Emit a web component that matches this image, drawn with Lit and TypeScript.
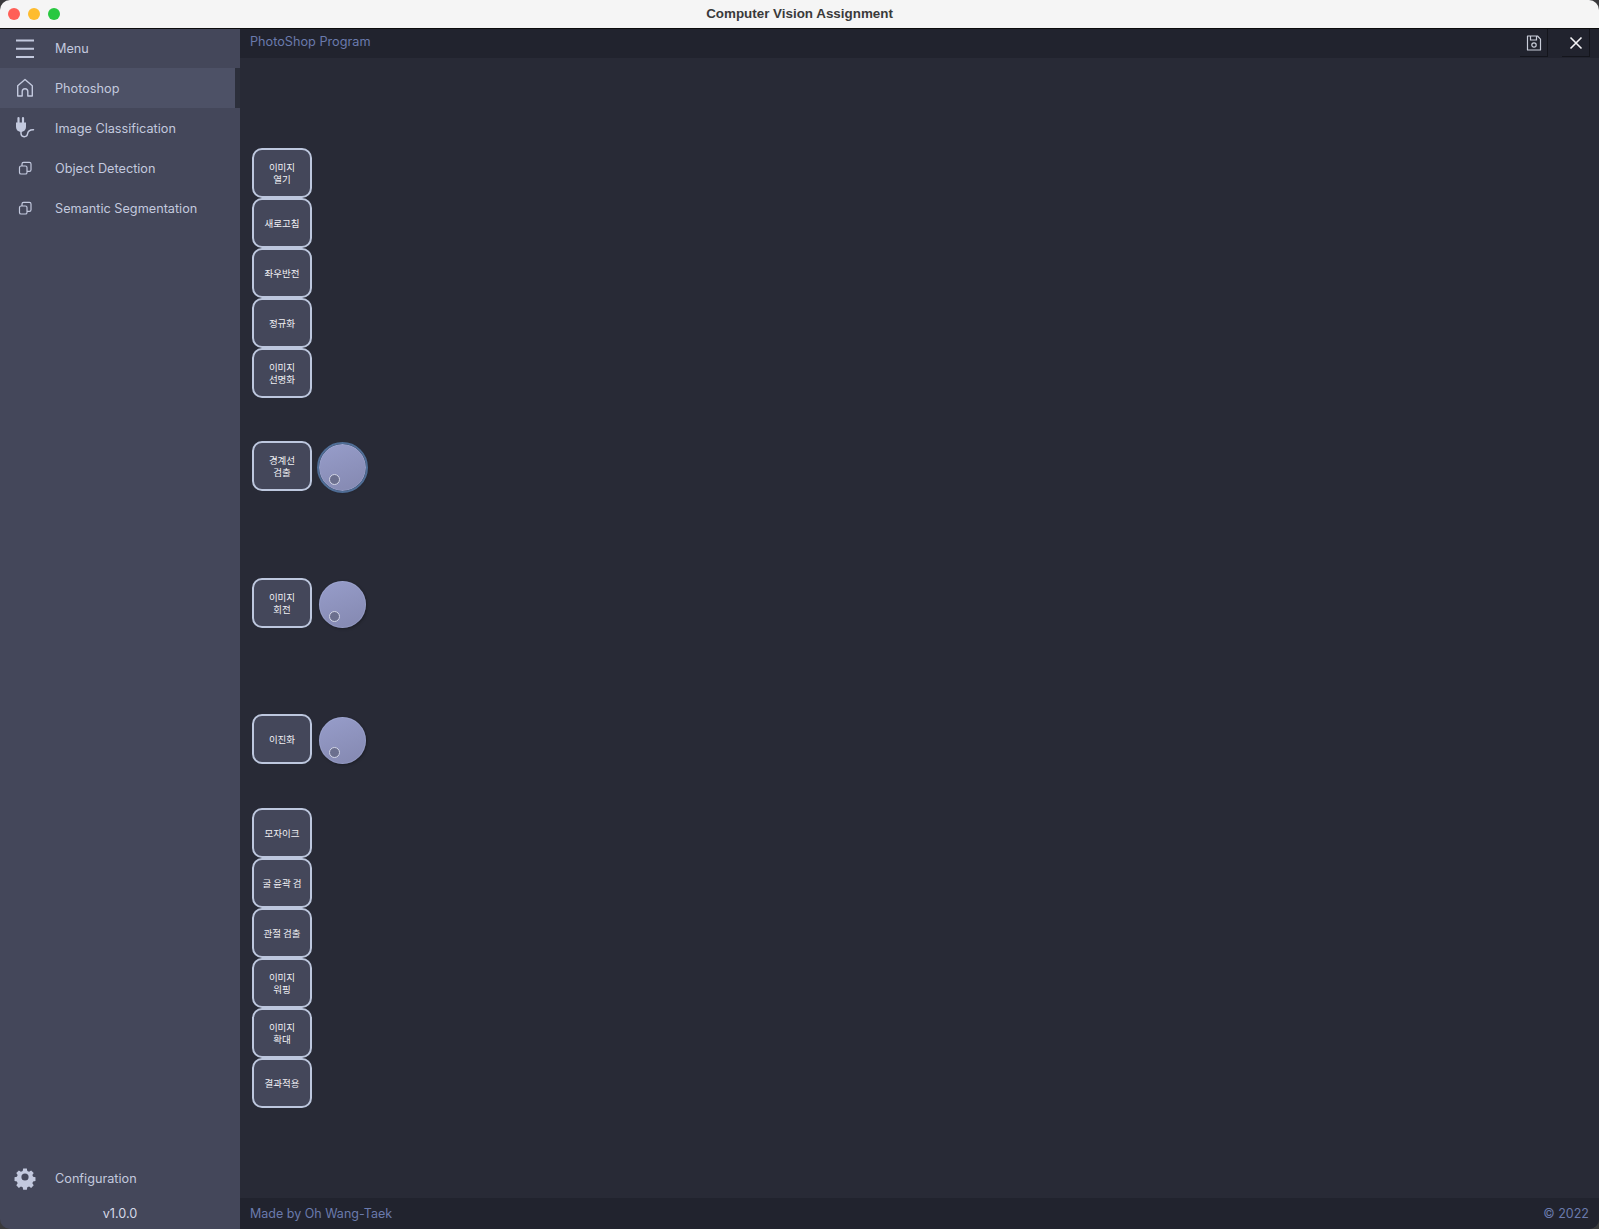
import { LitElement, html, css, svg } from "lit";
import { customElement } from "lit/decorators.js";

const copyIcon = svg`<path d="M13 14v-2a1.6 1.6 0 0 1 1.6-1.6h5.8a1.6 1.6 0 0 1 1.6 1.6v5.8a1.6 1.6 0 0 1-1.6 1.6H18" fill="none" stroke="currentColor" stroke-width="1.2"/><rect x="10.5" y="14" width="7.5" height="8" rx="1.6" fill="none" stroke="currentColor" stroke-width="1.2"/>`;

const icons = {
  menu: svg`<path d="M7 7.5h18M7 15.75h18M7 24h18" fill="none" stroke="currentColor" stroke-width="1.8"/>`,
  home: svg`<path d="M8.7 24V13.8L16 7.5l7.3 6.3V24h-4.5v-4.5a2.8 2.8 0 0 0-5.6 0V24z" fill="none" stroke="currentColor" stroke-width="1.4" stroke-linejoin="round"/>`,
  plug: svg`<path d="M9.5 6v4.5M14 6v4.5" stroke="currentColor" stroke-width="2.2" stroke-linecap="round" fill="none"/><path d="M7 10.5h10v4.5a5 5 0 0 1-10 0z" fill="currentColor"/><path d="M12 19v2.5c0 4 6 4.2 6.5.5.4-3 3-4.3 6-4.2" fill="none" stroke="currentColor" stroke-width="1.5" stroke-linecap="round"/>`,
  copy: copyIcon,
  gear: svg`<path fill-rule="evenodd" fill="currentColor" d="M13.7 5.5h4.6l.6 3 2.2 1 2.6-1.7 3.2 3.2-1.7 2.6.9 2.2 3 .6v4.6l-3 .6-.9 2.2 1.7 2.6-3.2 3.2-2.6-1.7-2.2.9-.6 3h-4.6l-.6-3-2.2-.9-2.6 1.7-3.2-3.2 1.7-2.6-.9-2.2-3-.6v-4.6l3-.6.9-2.2-1.7-2.6 3.2-3.2 2.6 1.7 2.2-1zM16 11.5a4.5 4.5 0 1 0 0 9 4.500 4.500 0 0 0 0-9z" transform="translate(3.2 2.2) scale(.8)"/>`,
};

@customElement("app-root")
export class AppRoot extends LitElement {
  static styles = css`
    :host {
      display: block;
      width: 1599px;
      height: 1229px;
      background: #3a3a3c;
      font-family: Inter, "Noto Sans CJK KR", "Liberation Sans", sans-serif;
    }
    .window {
      width: 1599px;
      height: 1229px;
      display: flex;
      flex-direction: column;
      border-radius: 10px;
      overflow: hidden;
    }
    .titlebar {
      height: 29px;
      box-sizing: border-box;
      flex: none;
      background: #f5f5f5;
      border-bottom: 1px solid #0c0c0c;
      display: flex;
      align-items: center;
      position: relative;
      padding-left: 8px;
      gap: 8px;
    }
    .light { width: 12px; height: 12px; border-radius: 50%; margin-top: -1px; }
    .red { background: #ff5f57; }
    .yellow { background: #febc2e; }
    .green { background: #28c840; }
    .title {
      position: absolute;
      inset: 0;
      display: flex;
      align-items: center;
      justify-content: center;
      font-size: 13.4px;
      font-weight: 700;
      color: #3a3a3a;
      padding-bottom: 1px;
      font-family: "Liberation Sans", sans-serif;
    }
    .body { flex: 1; display: flex; min-height: 0; }
    .sidebar {
      width: 240px;
      flex: none;
      background: #44475a;
      display: flex;
      flex-direction: column;
      color: #c3c9de;
      font-size: 12.7px;
    }
    .item {
      height: 40px;
      display: flex;
      align-items: center;
      gap: 14px;
      padding-left: 9px;
      flex: none;
    }
    .item:first-child { height: 39px; }
    .item.active { background: #4d5166; margin-right: 5px; box-shadow: 5px 0 0 #2c2f3b; }
    .item svg { width: 32px; height: 32px; flex: none; }
    .spacer { flex: 1; }
    .version {
      height: 31px;
      box-sizing: border-box;
      padding-bottom: 1px;
      flex: none;
      display: flex;
      align-items: center;
      justify-content: center;
      color: #d5d9e8;
    }
    .right { flex: 1; display: flex; flex-direction: column; background: #282a36; min-width: 0; }
    .topbar {
      height: 29px;
      flex: none;
      background: #21232e;
      display: flex;
      align-items: center;
      padding-left: 10px;
      color: #6a7aac;
      font-size: 12.7px;
    }
    .topbar .name { flex: 1; margin-top: -5px; }
    .tbtn {
      width: 28px;
      height: 28px;
      margin-top: -1px;
      display: flex;
      align-items: center;
      justify-content: center;
      color: #c9cdd9;
      border-right: 1px solid #14151c;
      border-bottom: 1px solid #14151c;
      box-sizing: border-box;
    }
    .tbtn + .tbtn { margin-left: 14px; margin-right: 9px; color: #f4f4f6; }
    .tbtn svg { width: 20px; height: 20px; }
    .content {
      flex: 1;
      min-height: 0;
      padding: 90px 0 0 12px;
      display: flex;
      flex-direction: column;
    }
    .row { display: flex; align-items: center; gap: 5px; }
    .after-stack { margin-top: 43px; }
    .after-knob { margin-top: 87px; }
    .after-knob2 { margin-top: 86px; }
    .after-bin { margin-top: 44px; }
    .btn {
      width: 60px;
      height: 50px;
      box-sizing: border-box;
      flex: none;
      border: 2px solid #bdc7de;
      border-radius: 10px;
      background: #44475a;
      color: #f0f0f4;
      font-size: 9.5px;
      line-height: 12px;
      padding-bottom: 1px;
      display: flex;
      align-items: center;
      justify-content: center;
      text-align: center;
      white-space: pre-line;
      font-family: "Noto Sans CJK KR", sans-serif;
    }
    .knob {
      position: relative;
      width: 47px;
      height: 47px;
      margin: 2px 0 0 2px;
      border-radius: 50%;
      background: linear-gradient(160deg, #979dca, #8488b0);
      box-shadow: 1px 1px 3px rgba(0, 0, 0, .3), inset 0 0 0 1px rgba(180, 190, 230, .25);
      flex: none;
    }
    .knob.focus { outline: 2px solid #4f6d96; outline-offset: 0; }
    .dot {
      position: absolute;
      left: 10px;
      top: 30px;
      width: 9px;
      height: 9px;
      border-radius: 50%;
      background: #6b6f8e;
      border: 1px solid #d3d6e6;
    }
    .bottombar {
      height: 31px;
      box-sizing: border-box;
      padding: 0 10px 1px;
      flex: none;
      background: #21232e;
      display: flex;
      align-items: center;
      justify-content: space-between;
      color: #6a7aac;
      font-size: 12.5px;
    }
  `;

  private icon(body: unknown) {
    return html`<svg viewBox="0 0 32 32">${body}</svg>`;
  }

  private item(label: string, body: unknown, active = false) {
    return html`<div class="item ${active ? "active" : ""}">${this.icon(body)}<span>${label}</span></div>`;
  }

  private btn(label: string) {
    return html`<div class="btn">${label}</div>`;
  }

  private knobRow(label: string, cls: string, focus = false) {
    return html`<div class="row ${cls}">
      ${this.btn(label)}
      <div class="knob ${focus ? "focus" : ""}"><div class="dot"></div></div>
    </div>`;
  }

  render() {
    return html`<div class="window">
      <div class="titlebar">
        <div class="light red"></div>
        <div class="light yellow"></div>
        <div class="light green"></div>
        <div class="title">Computer Vision Assignment</div>
      </div>
      <div class="body">
        <div class="sidebar">
          ${this.item("Menu", icons.menu)}
          ${this.item("Photoshop", icons.home, true)}
          ${this.item("Image Classification", icons.plug)}
          ${this.item("Object Detection", icons.copy)}
          ${this.item("Semantic Segmentation", icons.copy)}
          <div class="spacer"></div>
          ${this.item("Configuration", icons.gear)}
          <div class="version">v1.0.0</div>
        </div>
        <div class="right">
          <div class="topbar">
            <span class="name">PhotoShop Program</span>
            <div class="tbtn">
              <svg viewBox="0 0 20 20" fill="none" stroke="currentColor" stroke-width="1.2">
                <path d="M3.5 3h10l3 3.2V17h-13z" stroke-linejoin="round"/>
                <path d="M6.5 3v4h6V3"/>
                <circle cx="10" cy="12" r="2.2"/>
              </svg>
            </div>
            <div class="tbtn">
              <svg viewBox="0 0 20 20" fill="none" stroke="currentColor" stroke-width="1.6">
                <path d="M4.5 4.5l11 11M15.5 4.5l-11 11"/>
              </svg>
            </div>
          </div>
          <div class="content">
            ${["이미지\n열기", "새로고침", "좌우반전", "정규화", "이미지\n선명화"].map((l) => this.btn(l))}
            ${this.knobRow("경계선\n검출", "after-stack", true)}
            ${this.knobRow("이미지\n회전", "after-knob")}
            ${this.knobRow("이진화", "after-knob2")}
            <div class="after-bin"></div>
            ${["모자이크", "굴 윤곽 검", "관절 검출", "이미지\n워핑", "이미지\n확대", "결과적용"].map((l) => this.btn(l))}
          </div>
          <div class="bottombar"><span>Made by Oh Wang-Taek</span><span>© 2022</span></div>
        </div>
      </div>
    </div>`;
  }
}
